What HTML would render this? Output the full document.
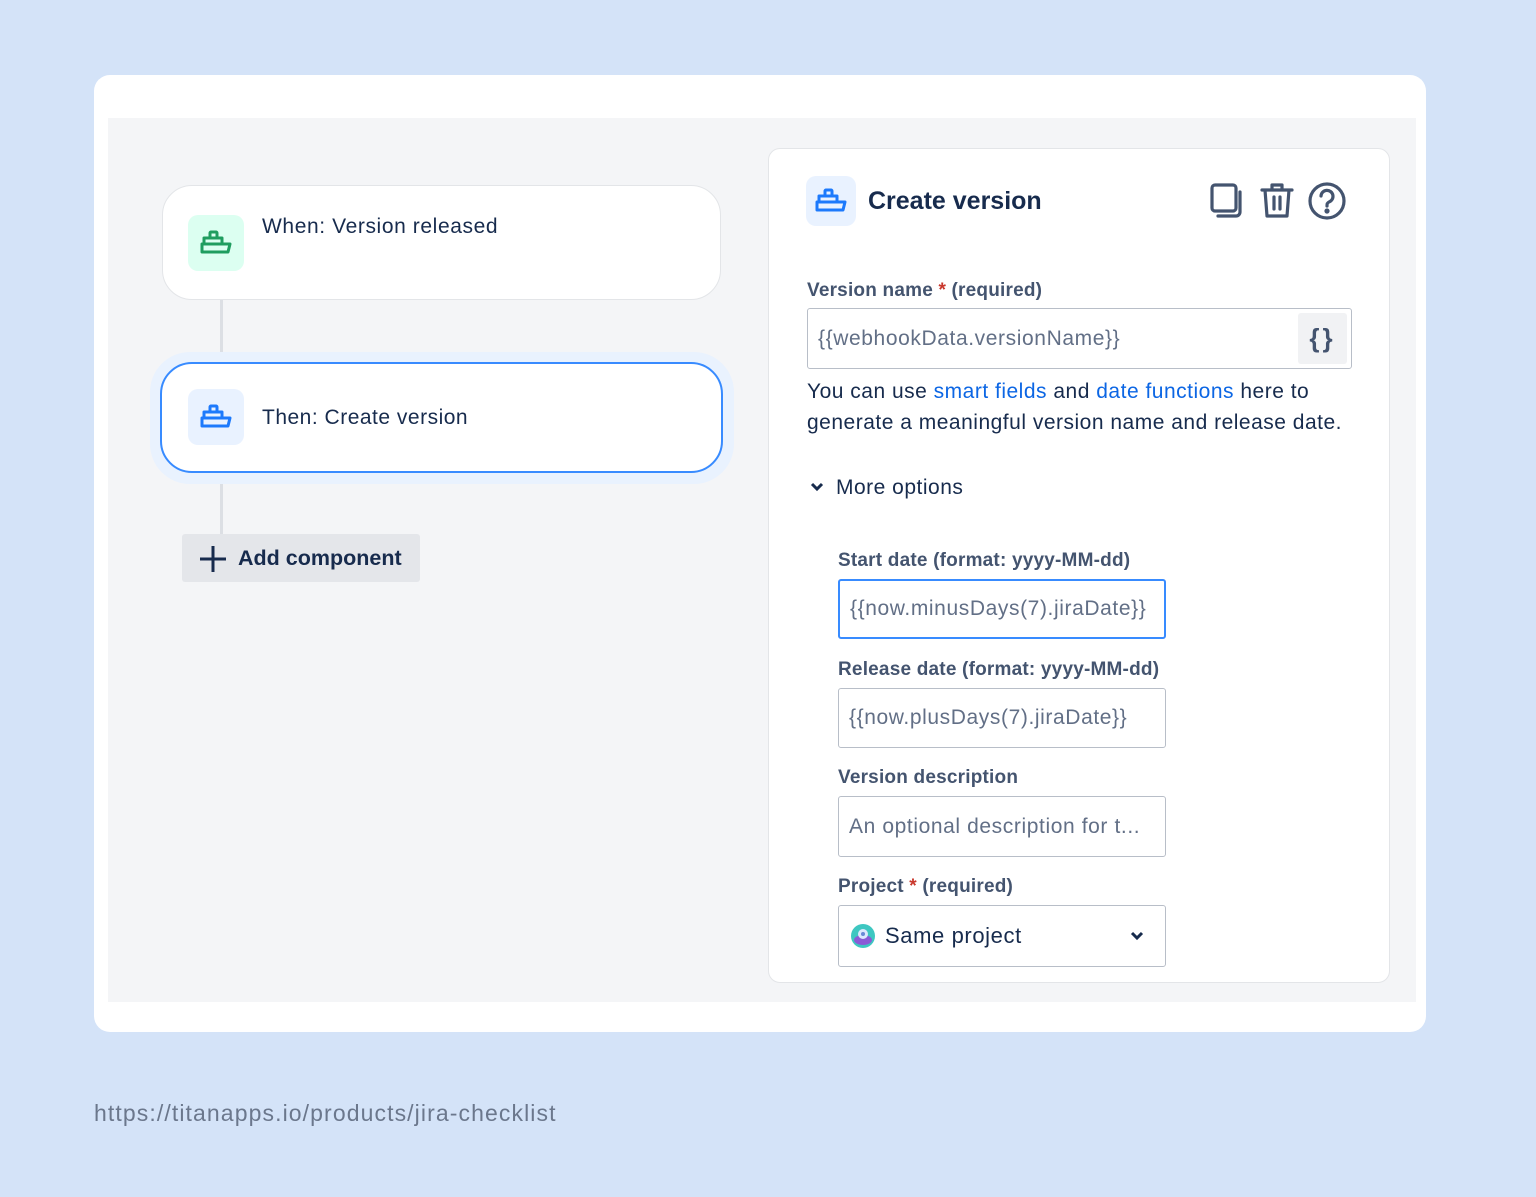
<!DOCTYPE html>
<html><head><meta charset="utf-8"><style>
*{box-sizing:border-box;margin:0;padding:0}
body{width:1536px;height:1197px;background:#d4e3f8;font-family:"Liberation Sans",sans-serif;position:relative;overflow:hidden;color:#172b4d}
.abs{position:absolute}
.card{left:94px;top:75px;width:1332px;height:957px;background:#fff;border-radius:16px}
.inner{left:108px;top:118px;width:1308px;height:884px;background:#f4f5f7}
.node{background:#fff;border:1px solid #e3e5e8;border-radius:30px}
.ic{width:56px;height:56px;border-radius:10px;display:flex;align-items:center;justify-content:center}
.lbl{font-size:19px;font-weight:bold;color:#44546f;letter-spacing:0.2px}
.inp{border:1px solid #b8bec8;border-radius:3px;background:#fff;font-size:21px;color:#626f86;padding-left:10px;display:flex;align-items:center;letter-spacing:0.6px}
.req{color:#c9372c}
a{color:#0c66e4;text-decoration:none}
</style></head><body>
<div class="abs card"></div>
<div class="abs inner"></div>
<div class="abs" style="left:220px;top:300px;width:3px;height:235px;background:#dcdfe4"></div>
<div class="abs node" style="left:162px;top:185px;width:559px;height:115px"></div>
<div class="abs ic" style="left:188px;top:215px;background:#dcfff1"><svg width="34" height="28" viewBox="0 0 34 28" fill="none" stroke="#1f9d5f" stroke-width="3" stroke-linejoin="round"><rect x="11" y="3" width="7" height="6" rx="1"/><rect x="5" y="9" width="18" height="6"/><path d="M3 15h28l-2 8H3z"/></svg></div>
<div class="abs" style="left:262px;top:215px;font-size:21px;letter-spacing:0.6px">When: Version released</div>
<div class="abs" style="left:150px;top:352px;width:584px;height:132px;background:#e9f2fe;border-radius:40px"></div>
<div class="abs node" style="left:160px;top:362px;width:563px;height:111px;border:2px solid #388bff;border-radius:32px"></div>
<div class="abs ic" style="left:188px;top:389px;background:#e9f2ff"><svg width="34" height="28" viewBox="0 0 34 28" fill="none" stroke="#1d7afc" stroke-width="3" stroke-linejoin="round"><rect x="11" y="3" width="7" height="6" rx="1"/><rect x="5" y="9" width="18" height="6"/><path d="M3 15h28l-2 8H3z"/></svg></div>
<div class="abs" style="left:262px;top:406px;font-size:21px;letter-spacing:0.5px">Then: Create version</div>
<div class="abs" style="left:182px;top:534px;width:238px;height:48px;background:#e4e6ea;border-radius:3px"></div>
<div class="abs" style="left:198px;top:544px"><svg width="30" height="30" viewBox="0 0 30 30" stroke="#172b4d" stroke-width="3"><path d="M15 2v26M2 15h26"/></svg></div>
<div class="abs" style="left:238px;top:546px;font-size:21.5px;font-weight:bold">Add component</div>

<div class="abs" style="left:768px;top:148px;width:622px;height:835px;background:#fff;border:1px solid #e3e5e8;border-radius:12px"></div>
<div class="abs ic" style="left:806px;top:176px;width:50px;height:50px;background:#e9f2ff"><svg width="34" height="28" viewBox="0 0 34 28" fill="none" stroke="#1d7afc" stroke-width="3" stroke-linejoin="round"><rect x="11" y="3" width="7" height="6" rx="1"/><rect x="5" y="9" width="18" height="6"/><path d="M3 15h28l-2 8H3z"/></svg></div>
<div class="abs" style="left:868px;top:187px;font-size:25px;font-weight:bold">Create version</div>
<svg class="abs" style="left:1206px;top:180px" width="146" height="42" viewBox="0 0 146 42" fill="none" stroke="#44546f" stroke-width="3.2" stroke-linejoin="round" stroke-linecap="round">
<rect x="6" y="5" width="24" height="26" rx="3"/><path d="M34 12v20a4 4 0 0 1-4 4H12"/>
<path d="M56 10h30M66 10V5h10v5M59 10l2 26h20l2-26M68 17v12M74 17v12"/>
<circle cx="121" cy="21" r="17"/><path d="M115 16a6 6 0 1 1 8 6c-2 1-2 2-2 4"/><circle cx="121" cy="31" r="1" fill="#44546f"/>
</svg>
<div class="abs lbl" style="left:807px;top:280px">Version name <span class="req">*</span> (required)</div>
<div class="abs inp" style="left:807px;top:308px;width:545px;height:61px">{{webhookData.versionName}}</div>
<div class="abs" style="left:1298px;top:313px;width:49px;height:51px;background:#f1f2f4;border-radius:3px;font-size:26px;font-weight:bold;color:#44546f;display:flex;align-items:center;justify-content:center;letter-spacing:3px">{}</div>
<div class="abs" style="left:807px;top:376px;font-size:21px;line-height:31px;width:570px;letter-spacing:0.5px">You can use <a>smart fields</a> and <a>date functions</a> here to generate a meaningful version name and release date.</div>
<svg class="abs" style="left:808px;top:480px" width="18" height="14" viewBox="0 0 18 14" fill="none" stroke="#172b4d" stroke-width="3"><path d="M4 4l5 5 5-5"/></svg>
<div class="abs" style="left:836px;top:476px;font-size:21px;letter-spacing:0.5px">More options</div>
<div class="abs lbl" style="left:838px;top:550px">Start date (format: yyyy-MM-dd)</div>
<div class="abs inp" style="left:838px;top:579px;width:328px;height:60px;border:2px solid #388bff">{{now.minusDays(7).jiraDate}}</div>
<div class="abs lbl" style="left:838px;top:659px">Release date (format: yyyy-MM-dd)</div>
<div class="abs inp" style="left:838px;top:688px;width:328px;height:60px">{{now.plusDays(7).jiraDate}}</div>
<div class="abs lbl" style="left:838px;top:767px">Version description</div>
<div class="abs inp" style="left:838px;top:796px;width:328px;height:61px">An optional description for t...</div>
<div class="abs lbl" style="left:838px;top:876px">Project <span class="req">*</span> (required)</div>
<div class="abs inp" style="left:838px;top:905px;width:328px;height:62px;color:#172b4d;font-size:22px">
<svg width="28" height="28" viewBox="0 0 28 28" style="margin-right:8px"><circle cx="14" cy="14" r="12" fill="#3ec7c1"/><ellipse cx="14" cy="18" rx="9" ry="5" fill="#8a5bd6"/><circle cx="14" cy="12" r="5" fill="#dce9ff"/><circle cx="14" cy="12" r="2" fill="#6a8ad6"/></svg>Same project</div>
<svg class="abs" style="left:1128px;top:929px" width="18" height="14" viewBox="0 0 18 14" fill="none" stroke="#172b4d" stroke-width="3"><path d="M4 4l5 5 5-5"/></svg>

<div class="abs" style="left:94px;top:1100px;font-size:23px;color:#6b778c;letter-spacing:1.1px">https://titanapps.io/products/jira-checklist</div>
</body></html>
